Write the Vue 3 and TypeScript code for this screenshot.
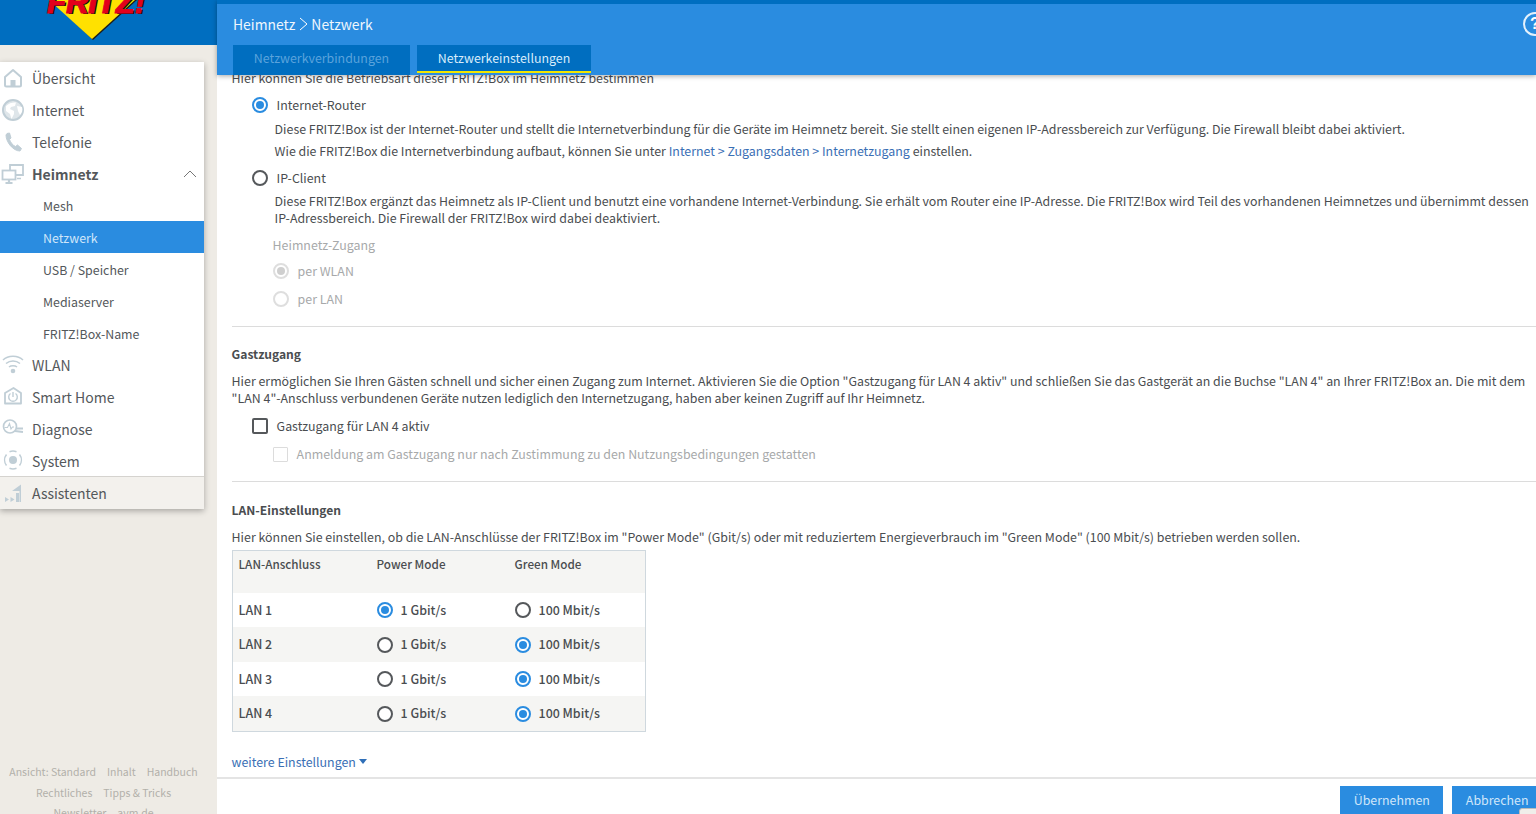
<script setup lang="ts">
interface NavItem { label: string; icon?: string; sub?: boolean; active?: boolean; bold?: boolean; chevron?: boolean; low?: boolean }
const nav: NavItem[] = [
  { label: 'Übersicht', icon: 'home' },
  { label: 'Internet', icon: 'globe' },
  { label: 'Telefonie', icon: 'phone' },
  { label: 'Heimnetz', icon: 'net', bold: true, chevron: true, low: true },
  { label: 'Mesh', sub: true },
  { label: 'Netzwerk', sub: true, active: true },
  { label: 'USB / Speicher', sub: true },
  { label: 'Mediaserver', sub: true },
  { label: 'FRITZ!Box-Name', sub: true },
  { label: 'WLAN', icon: 'wifi' },
  { label: 'Smart Home', icon: 'smart', low: true },
  { label: 'Diagnose', icon: 'diag', low: true },
  { label: 'System', icon: 'system', low: true },
]
const lan = [
  { name: 'LAN 1', power: true },
  { name: 'LAN 2', power: false },
  { name: 'LAN 3', power: false },
  { name: 'LAN 4', power: false },
]
</script>

<template>
  <div class="page">
    <aside class="side">
      <div class="brand">
        <svg class="logo" width="110" height="45" viewBox="0 0 110 45">
          <polygon points="13,0 99,0 55,40" fill="#1c1c1c" />
          <polygon points="11,0 97,0 54,39" fill="#ffe100" />
        </svg>
        <span class="logotext">FRITZ!</span>
      </div>
      <nav class="menu">
        <div v-for="n in nav" :key="n.label" class="item" :class="{ sub: n.sub, active: n.active, bold: n.bold, low: n.low }">
          <svg v-if="n.icon" class="ico" width="26" height="26" viewBox="0 0 26 26" fill="none" stroke="#c0ced6" stroke-width="2">
            <template v-if="n.icon === 'home'">
              <path d="M5 12 L13 5 L21 12 V20 a1.500 1.500 0 0 1 -1.500 1.500 H6.500 a1.500 1.500 0 0 1 -1.500 -1.500 Z" stroke-linejoin="round" />
              <rect x="10.500" y="15" width="5" height="6" fill="#c0ced6" stroke="none" />
            </template>
            <template v-else-if="n.icon === 'globe'">
              <circle cx="13" cy="13" r="10" fill="#dfe6ea" stroke-width="2" />
              <path d="M6 9 C9 6 13 5 16 5.500 L15 9 L11 10 L10 12 L14 14 L14 17 L11.500 22 L10 17 L6 14 Z M17 9 L22 10 C23 13 22 16 20 18 L18 14 Z" fill="#fff" stroke="none" />
            </template>
            <path v-else-if="n.icon === 'phone'" d="M7 4.500 L9.500 4 L11 9 L9.500 10.500 C10.500 13.500 13 16.500 15.500 17.500 L17.500 16 L21.500 19.500 L20 22 C13 22 6 13 6 6 Z" fill="#c0ced6" stroke-linejoin="round" stroke-width="1" />
            <template v-else-if="n.icon === 'net'">
              <rect x="2.500" y="10.500" width="13" height="9" stroke-width="1.800" />
              <path d="M16 15 H23 V5 H10 V10" stroke-width="1.800" />
              <path d="M5.500 23 H12.500 M9 19.500 V23" stroke-width="2.200" />
              <path d="M17 18.500 H21" stroke-width="1.500" />
            </template>
            <template v-else-if="n.icon === 'wifi'">
              <path d="M3 8 C8 3 18 3 23 8 M6 11.500 C10 8 16 8 20 11.500 M9 15 C11 13.300 15 13.300 17 15" stroke-width="1.500" />
              <circle cx="13" cy="19" r="2.300" fill="#c0ced6" stroke="none" />
            </template>
            <template v-else-if="n.icon === 'smart'">
              <path d="M5 10 L13.500 5 L21 10 V20.500 H5 Z" stroke-width="1.800" stroke-linejoin="round" />
              <path d="M10.500 10.500 A4.300 4.300 0 1 0 15.500 10.500" stroke-width="1.400" />
              <path d="M13 9 V14" stroke-width="1.400" />
            </template>
            <template v-else-if="n.icon === 'diag'">
              <circle cx="10" cy="11.500" r="6.500" stroke-width="1.700" />
              <path d="M4.500 12.500 H7.500 L9.500 8.500 L11 14 L12.500 12 H14" stroke-width="1.100" />
              <path d="M16 13.500 H23 M15 16 L23 17" stroke-width="1.800" />
            </template>
            <template v-else-if="n.icon === 'system'">
              <circle cx="13" cy="13" r="4" fill="#c0ced6" stroke="none" />
              <path d="M6.500 7.500 A9 9 0 0 0 6.500 18.500 M19.500 7.500 A9 9 0 0 1 19.500 18.500 M9.500 4.800 A9 9 0 0 1 16.500 4.800 M9.500 21.200 A9 9 0 0 0 16.500 21.200" stroke-width="1.500" />
            </template>
          </svg>
          <span class="label">{{ n.label }}</span>
          <svg v-if="n.chevron" class="chev" width="14" height="8" viewBox="0 0 14 8" fill="none" stroke="#777" stroke-width="1"><path d="M1 7 L7 1 L13 7" /></svg>
        </div>
        <div class="item assist">
          <svg class="ico" width="26" height="26" viewBox="0 0 26 26" fill="#c0ced6">
            <path d="M5 17 L9 19.500 L5 22 Z M10.500 17 L14.500 19.500 L10.500 22 Z M16 13 H19 V22 H16 Z M12 11 L21 4.500 V22 H19.500 V11 Z" />
          </svg>
          <span class="label">Assistenten</span>
        </div>
      </nav>
      <footer class="links">
        <div><span>Ansicht: Standard</span><span>Inhalt</span><span>Handbuch</span></div>
        <div><span>Rechtliches</span><span>Tipps &amp; Tricks</span></div>
        <div><span>Newsletter</span><span>avm.de</span></div>
      </footer>
    </aside>

    <main class="main">
      <header class="head">
        <div class="crumb">
          <span>Heimnetz</span>
          <svg width="9" height="14" viewBox="0 0 9 14" fill="none" stroke="#fff" stroke-width="1"><path d="M1 1 L8 7 L1 13" /></svg>
          <span>Netzwerk</span>
        </div>
        <div class="tabs">
          <div class="tab">Netzwerkverbindungen</div>
          <div class="tab on">Netzwerkeinstellungen</div>
        </div>
        <div class="help">?</div>
      </header>

      <section class="content">
        <p class="intro">Hier können Sie die Betriebsart dieser FRITZ!Box im Heimnetz bestimmen</p>

        <label class="opt first"><i class="radio checked"></i><span>Internet-Router</span></label>
        <p class="desc d1">Diese FRITZ!Box ist der Internet-Router und stellt die Internetverbindung für die Geräte im Heimnetz bereit. Sie stellt einen eigenen IP-Adressbereich zur Verfügung. Die Firewall bleibt dabei aktiviert.</p>
        <p class="desc d2">Wie die FRITZ!Box die Internetverbindung aufbaut, können Sie unter <a>Internet &gt; Zugangsdaten &gt; Internetzugang</a> einstellen.</p>

        <label class="opt second"><i class="radio"></i><span>IP-Client</span></label>
        <p class="desc d3">Diese FRITZ!Box ergänzt das Heimnetz als IP-Client und benutzt eine vorhandene Internet-Verbindung. Sie erhält vom Router eine IP-Adresse. Die FRITZ!Box wird Teil des vorhandenen Heimnetzes und übernimmt dessen IP-Adressbereich. Die Firewall der FRITZ!Box wird dabei deaktiviert.</p>
        <p class="desc muted d4">Heimnetz-Zugang</p>
        <label class="opt dis w"><i class="radio off checked"></i><span>per WLAN</span></label>
        <label class="opt dis l"><i class="radio off"></i><span>per LAN</span></label>

        <hr class="rule r1" />
        <h4 class="h-guest">Gastzugang</h4>
        <p class="para">Hier ermöglichen Sie Ihren Gästen schnell und sicher einen Zugang zum Internet. Aktivieren Sie die Option "Gastzugang für LAN 4 aktiv" und schließen Sie das Gastgerät an die Buchse "LAN 4" an Ihrer FRITZ!Box an. Die mit dem "LAN 4"-Anschluss verbundenen Geräte nutzen lediglich den Internetzugang, haben aber keinen Zugriff auf Ihr Heimnetz.</p>
        <label class="opt chk1"><i class="check"></i><span>Gastzugang für LAN 4 aktiv</span></label>
        <label class="opt dis chk2"><i class="check off"></i><span>Anmeldung am Gastzugang nur nach Zustimmung zu den Nutzungsbedingungen gestatten</span></label>

        <hr class="rule r2" />
        <h4 class="h-lan">LAN-Einstellungen</h4>
        <p class="para one">Hier können Sie einstellen, ob die LAN-Anschlüsse der FRITZ!Box im "Power Mode" (Gbit/s) oder mit reduziertem Energieverbrauch im "Green Mode" (100 Mbit/s) betrieben werden sollen.</p>

        <div class="table">
          <div class="row hd"><div>LAN-Anschluss</div><div>Power Mode</div><div>Green Mode</div></div>
          <div v-for="r in lan" :key="r.name" class="row">
            <div>{{ r.name }}</div>
            <div class="cell"><i class="radio" :class="{ checked: r.power }"></i>1 Gbit/s</div>
            <div class="cell"><i class="radio" :class="{ checked: !r.power }"></i>100 Mbit/s</div>
          </div>
        </div>

        <a class="more">weitere Einstellungen<i class="caret"></i></a>
      </section>

      <footer class="actions">
        <button>Übernehmen</button>
        <button>Abbrechen</button>
        <span class="corner"></span>
      </footer>
    </main>
  </div>
</template>

<style>
html, body { margin: 0; overflow: hidden; }
</style>

<style scoped>
.page {
  display: flex;
  width: 1536px;
  height: 814px;
  overflow: hidden;
  background: #eeebe5;
  font-family: "Noto Sans CJK SC", "Open Sans", sans-serif;
  font-size: 12.4px;
  color: #4a4d50;
}
.side { width: 217px; flex: none; display: flex; flex-direction: column; }
.brand { height: 45px; flex: none; background: #006ec0; position: relative; overflow: hidden; }
.logo { position: absolute; left: 38px; top: 0; }
.logotext {
  position: absolute;
  left: 47px;
  top: -15px;
  font: italic 900 31px/36px "Liberation Sans", sans-serif;
  -webkit-text-stroke: 1px #e3001b;
  color: #e3001b;
  text-shadow: 2px 1px 0 #111;
}
.menu {
  margin-top: 17px;
  width: 204px;
  background: #fff;
  box-shadow: 0 2px 6px rgba(0, 0, 0, .3);
}
.item { height: 31.850px; display: flex; align-items: center; position: relative; font-size: 14px; color: #54585b; }
.item .ico { flex: none; margin-right: 6px; }
.item.bold { font-weight: 700; }
.item.low .label { padding-top: 1px; }
.item.sub { padding-left: 43px; font-size: 12.400px; }
.item.sub .label { padding-top: 2px; }
.item.active { background: #2a8ce0; color: #cfe6fa; }
.chev { position: absolute; right: 7px; top: 12px; }
.item.assist { height: 33px; background: #f3f1ed; border-top: 1px solid #d5d3cf; box-sizing: border-box; }
.links { margin-top: auto; height: 52px; width: 207px; font-size: 10.500px; line-height: 20.500px; color: #b2b0aa; text-align: center; overflow: hidden; white-space: nowrap; }
.links span { margin: 0 5.500px; }

.main { flex: 1; min-width: 0; background: #fff; display: flex; flex-direction: column; position: relative; }
.head {
  height: 71px;
  border-top: 4px solid #006ec0;
  background: #2a8ce0;
  color: #fff;
  position: relative;
  z-index: 2;
  flex: none;
  padding-left: 16px;
  box-shadow: 0 1px 5px rgba(0, 0, 0, .35);
}
.crumb { display: flex; align-items: center; gap: 3px; font-size: 13.900px; line-height: 20px; padding-top: 9px; height: 30px; box-sizing: border-box; color: #eef6fd; }
.crumb svg { margin-left: 1px; }
.tabs { display: flex; gap: 7px; margin-top: 11px; }
.tab { width: 177px; height: 30px; box-sizing: border-box; background: #006ec0; color: #5aa3dc; font-size: 12.400px; line-height: 27px; text-align: center; }
.tab.on { width: 174px; color: #d8ecfb; border-bottom: 2px solid #f2e600; height: 28px; }
.help {
  position: absolute; left: 1306px; top: 8px; width: 20px; height: 20px;
  border: 2px solid #e4f1fc; border-radius: 50%; text-align: center;
  font: 700 16px/20px "Liberation Sans", sans-serif; color: #fff;
}

.content { flex: 1; min-height: 0; overflow: hidden; margin-top: -5px; padding-left: 14.600px; font-size: 12.400px; line-height: 17px; position: relative; }
.content p { margin: 0; }
.intro { height: 17px; }
.opt { display: flex; align-items: center; height: 24px; }
.opt span { margin-left: 9px; }
.opt.first { margin: 6px 0 0 20px; }
.desc { margin-left: 43px !important; }
.d1 { margin-top: 4px !important; }
.d2 { margin-top: 5px !important; }
.d2 a, .more { color: #3a6fb5; }
.opt.second { margin: 6px 0 0 20px; }
.d3 { margin-top: 3px !important; }
.muted { color: #a7a9aa; }
.d4 { margin-top: 10px !important; margin-left: 41px !important; }
.opt.dis { color: #a7a9aa; margin-left: 41px; }
.opt.w { margin-top: 5px; }
.opt.l { margin-top: 4px; }
.rule { border: 0; border-top: 1px solid #dcdcdc; margin: 0; }
.r1 { margin-top: 15px; }
h4 { margin: 0; font-size: 12.100px; font-weight: 700; line-height: 17px; }
.h-guest { margin-top: 18px; }
.para { margin-top: 11px !important; margin-right: 1px; }
.opt.chk1 { margin: 7px 0 0 20px; }
.opt.chk2 { margin-top: 4px; }
.rule.r2 { margin-top: 15px; }
.h-lan { margin-top: 19px; }
.table { margin-top: 3.500px; width: 414px; box-sizing: border-box; border: 1px solid #cfd8de; font-size: 12.400px; font-weight: 500; }
.row { display: grid; grid-template-columns: 138px 138px 1fr; height: 34.500px; align-items: center; padding-left: 6px; padding-top: 1px; box-sizing: border-box; background: #fff; }
.row:nth-child(odd) { background: #f5f5f3; }
.row.hd { height: 42px; align-items: start; padding-top: 4px; background: #f5f5f3; font-size: 11.700px; }
.cell { display: flex; align-items: center; gap: 8px; }
.more { display: inline-block; margin-top: 22px; }
.caret { display: inline-block; margin-left: 3px; vertical-align: 3px; border: 4.500px solid transparent; border-top: 5px solid #2f6fb8; border-bottom: 0; }

.radio {
  display: block; flex: none; width: 12px; height: 12px; box-sizing: content-box;
  border: 2px solid #55585b; border-radius: 50%; background: #fff; position: relative;
}
.radio.checked { border-color: #2a8ce0; }
.radio.checked::after {
  content: ""; position: absolute; left: 2px; top: 2px; width: 8px; height: 8px; border-radius: 50%; background: #2a8ce0;
}
.radio.off { border-color: #dedede; }
.radio.off.checked::after { background: #cfcfcf; }
.check { display: block; flex: none; width: 12px; height: 12px; border: 2px solid #55585b; border-radius: 2px; }
.check.off { width: 13px; height: 13px; border: 1px solid #dcdcdc; border-radius: 1px; }

.actions {
  height: 37px; flex: none; box-sizing: border-box; border-top: 2px solid #e4e4e4;
  display: flex; justify-content: flex-end; gap: 9px; padding-top: 7px; position: relative; background: #fff;
  overflow: hidden; margin-right: -6px;
}
.actions button {
  height: 40px; border: 0; background: #2a8ce0; color: #cfe6fa;
  font: inherit; font-size: 12.400px; line-height: 28px; padding: 0 13.500px 12px; box-sizing: border-box;
}
.corner { position: absolute; right: 3px; top: 29px; width: 18px; height: 10px; background: #f0eeea; border: 1px solid #bbb; border-radius: 3px; }
</style>
